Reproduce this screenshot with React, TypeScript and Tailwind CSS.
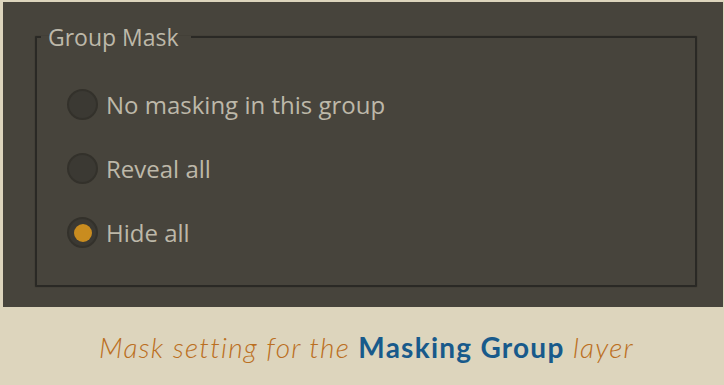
import { useState } from 'react';

const options = ['No masking in this group', 'Reveal all', 'Hide all'];

function Radio({ checked }: { checked: boolean }) {
  return (
    <span className="flex h-[31px] w-[31px] shrink-0 items-center justify-center rounded-full border-2 border-[#33312b] bg-[#3b3933]">
      {checked && <span className="h-[18px] w-[18px] rounded-full bg-[#c98c1f]" />}
    </span>
  );
}

export default function App() {
  const [mode, setMode] = useState(2);

  return (
    <div className="flex h-[385px] w-[724px] flex-col bg-[#ddd5bd] pl-[3px] pt-[2px]">
      <div className="h-[305px] w-[720px] bg-[#47443c] pl-[32px] pt-[22px]">
        <fieldset className="h-[263px] w-[662px] rounded-[1px] border-2 border-[#2a2925] shadow-[0_0_1px_#1f1e1a]">
          <legend className="ml-[4px] pl-[7px] pr-[12px] font-['Open_Sans',sans-serif] text-[23px] leading-[26px] text-[#bdb8a9]">
            Group Mask
          </legend>
          <div className="mt-[39px] flex flex-col gap-[33px] pl-[30px]">
            {options.map((label, i) => (
              <label
                key={label}
                className="flex cursor-default items-center gap-[8px] font-['Open_Sans',sans-serif] text-[24px] leading-[31px] text-[#bdb8a9]"
                onClick={() => setMode(i)}
              >
                <Radio checked={mode === i} />
                {label}
              </label>
            ))}
          </div>
        </fieldset>
      </div>
      <div className="flex flex-1 items-center justify-center pl-[6px] pt-[2px] font-['Lato',sans-serif] text-[28px] tracking-[1.25px]">
        <span className="font-light italic text-[#bb6f22]">Mask setting for the&nbsp;</span>
        <span className="font-bold text-[#185a8b]">Masking Group</span>
        <span className="font-light italic text-[#bb6f22]">&nbsp;layer</span>
      </div>
    </div>
  );
}
